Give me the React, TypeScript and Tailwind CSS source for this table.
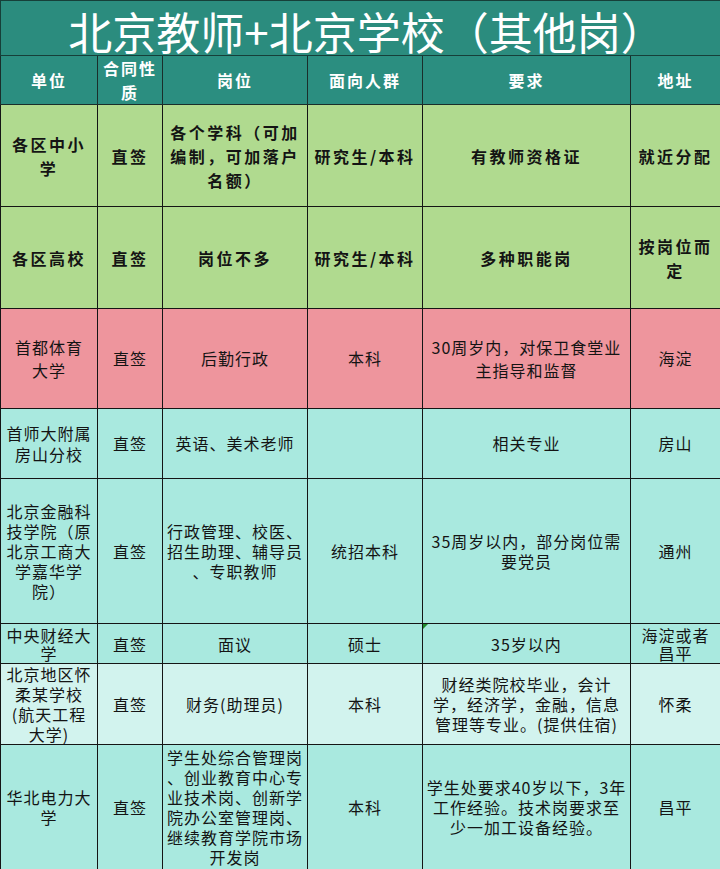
import React from "react";

type Row = {
  h: number;
  bg: string;
  bold?: boolean;
  lh: string;
  cells: string[][];
  mark?: boolean;
};

const rows: Row[] = [
  {
    h: 102,
    bg: "bg-[#b0da8f]",
    bold: true,
    lh: "leading-[24px]",
    cells: [
      ["各区中小", "学"],
      ["直签"],
      ["各个学科（可加", "编制，可加落户", "名额）"],
      ["研究生/本科"],
      ["有教师资格证"],
      ["就近分配"],
    ],
  },
  {
    h: 102,
    bg: "bg-[#b0da8f]",
    bold: true,
    lh: "leading-[24px]",
    cells: [
      ["各区高校"],
      ["直签"],
      ["岗位不多"],
      ["研究生/本科"],
      ["多种职能岗"],
      ["按岗位而", "定"],
    ],
  },
  {
    h: 100,
    bg: "bg-[#ee959d]",
    lh: "leading-[23px]",
    cells: [
      ["首都体育", "大学"],
      ["直签"],
      ["后勤行政"],
      ["本科"],
      ["30周岁内，对保卫食堂业", "主指导和监督"],
      ["海淀"],
    ],
  },
  {
    h: 70,
    bg: "bg-[#a9e9df]",
    lh: "leading-[21px]",
    cells: [
      ["首师大附属", "房山分校"],
      ["直签"],
      ["英语、美术老师"],
      [""],
      ["相关专业"],
      ["房山"],
    ],
  },
  {
    h: 145,
    bg: "bg-[#a9e9df]",
    lh: "leading-[20px]",
    cells: [
      ["北京金融科", "技学院（原", "北京工商大", "学嘉华学", "院）"],
      ["直签"],
      ["行政管理、校医、", "招生助理、辅导员", "、专职教师"],
      ["统招本科"],
      ["35周岁以内，部分岗位需", "要党员"],
      ["通州"],
    ],
  },
  {
    h: 40,
    bg: "bg-[#a9e9df]",
    lh: "leading-[18px]",
    mark: true,
    cells: [
      ["中央财经大", "学"],
      ["直签"],
      ["面议"],
      ["硕士"],
      ["35岁以内"],
      ["海淀或者", "昌平"],
    ],
  },
  {
    h: 81,
    bg: "bg-[#d2f3ee]",
    lh: "leading-[20px]",
    cells: [
      ["北京地区怀", "柔某学校", "(航天工程", "大学)"],
      ["直签"],
      ["财务(助理员)"],
      ["本科"],
      ["财经类院校毕业，会计", "学，经济学，金融，信息", "管理等专业。(提供住宿)"],
      ["怀柔"],
    ],
  },
  {
    h: 125,
    bg: "bg-[#a9e9df]",
    lh: "leading-[20px]",
    cells: [
      ["华北电力大", "学"],
      ["直签"],
      [
        "学生处综合管理岗",
        "、创业教育中心专",
        "业技术岗、创新学",
        "院办公室管理岗、",
        "继续教育学院市场",
        "开发岗",
      ],
      ["本科"],
      ["学生处要求40岁以下，3年", "工作经验。技术岗要求至", "少一加工设备经验。"],
      ["昌平"],
    ],
  },
];

const headers: string[][] = [
  ["单位"],
  ["合同性", "质"],
  ["岗位"],
  ["面向人群"],
  ["要求"],
  ["地址"],
];

export default function App() {
  return (
    <div className="w-[720px] h-[869px] bg-white font-['Noto_Sans_CJK_SC',sans-serif] overflow-hidden">
      <table className="table-fixed border-collapse w-[720px]">
        <colgroup>
          <col className="w-[97px]" />
          <col className="w-[65px]" />
          <col className="w-[145px]" />
          <col className="w-[115px]" />
          <col className="w-[208px]" />
          <col className="w-[90px]" />
        </colgroup>
        <tbody>
          <tr className="h-[55px]">
            <td
              colSpan={6}
              className="bg-[#2b8c7e] border border-[#163f39] text-center text-white text-[44px] leading-[46px] pt-[6px] pb-0 pl-[12px] whitespace-nowrap"
            >
              北京教师+北京学校（其他岗）
            </td>
          </tr>
          <tr className="h-[48px]">
            {headers.map((c, i) => (
              <td
                key={i}
                className="bg-[#2b8e80] border border-[#1a2e2b] text-center align-middle text-white font-bold text-[16px] leading-[24px] tracking-[2px] whitespace-nowrap p-0"
              >
                {c.map((l, j) => (
                  <div key={j}>{l}</div>
                ))}
              </td>
            ))}
          </tr>
          {rows.map((r, ri) => (
            <tr key={ri} style={{ height: r.h }}>
              {r.cells.map((c, ci) => (
                <td
                  key={ci}
                  className={`${r.bg} relative border border-[#151515] text-center align-middle text-[#141414] text-[16px] whitespace-nowrap p-0 ${r.lh} ${
                    r.bold ? "font-bold tracking-[2.5px]" : "tracking-[1px]"
                  }`}
                >
                  {r.mark && ci === 4 ? (
                    <div className="absolute left-0 top-0 w-0 h-0 border-t-[5px] border-t-[#1f8a2a] border-r-[5px] border-r-transparent" />
                  ) : null}
                  {c.map((l, j) => (
                    <div key={j}>{l}</div>
                  ))}
                </td>
              ))}
            </tr>
          ))}
        </tbody>
      </table>
    </div>
  );
}
